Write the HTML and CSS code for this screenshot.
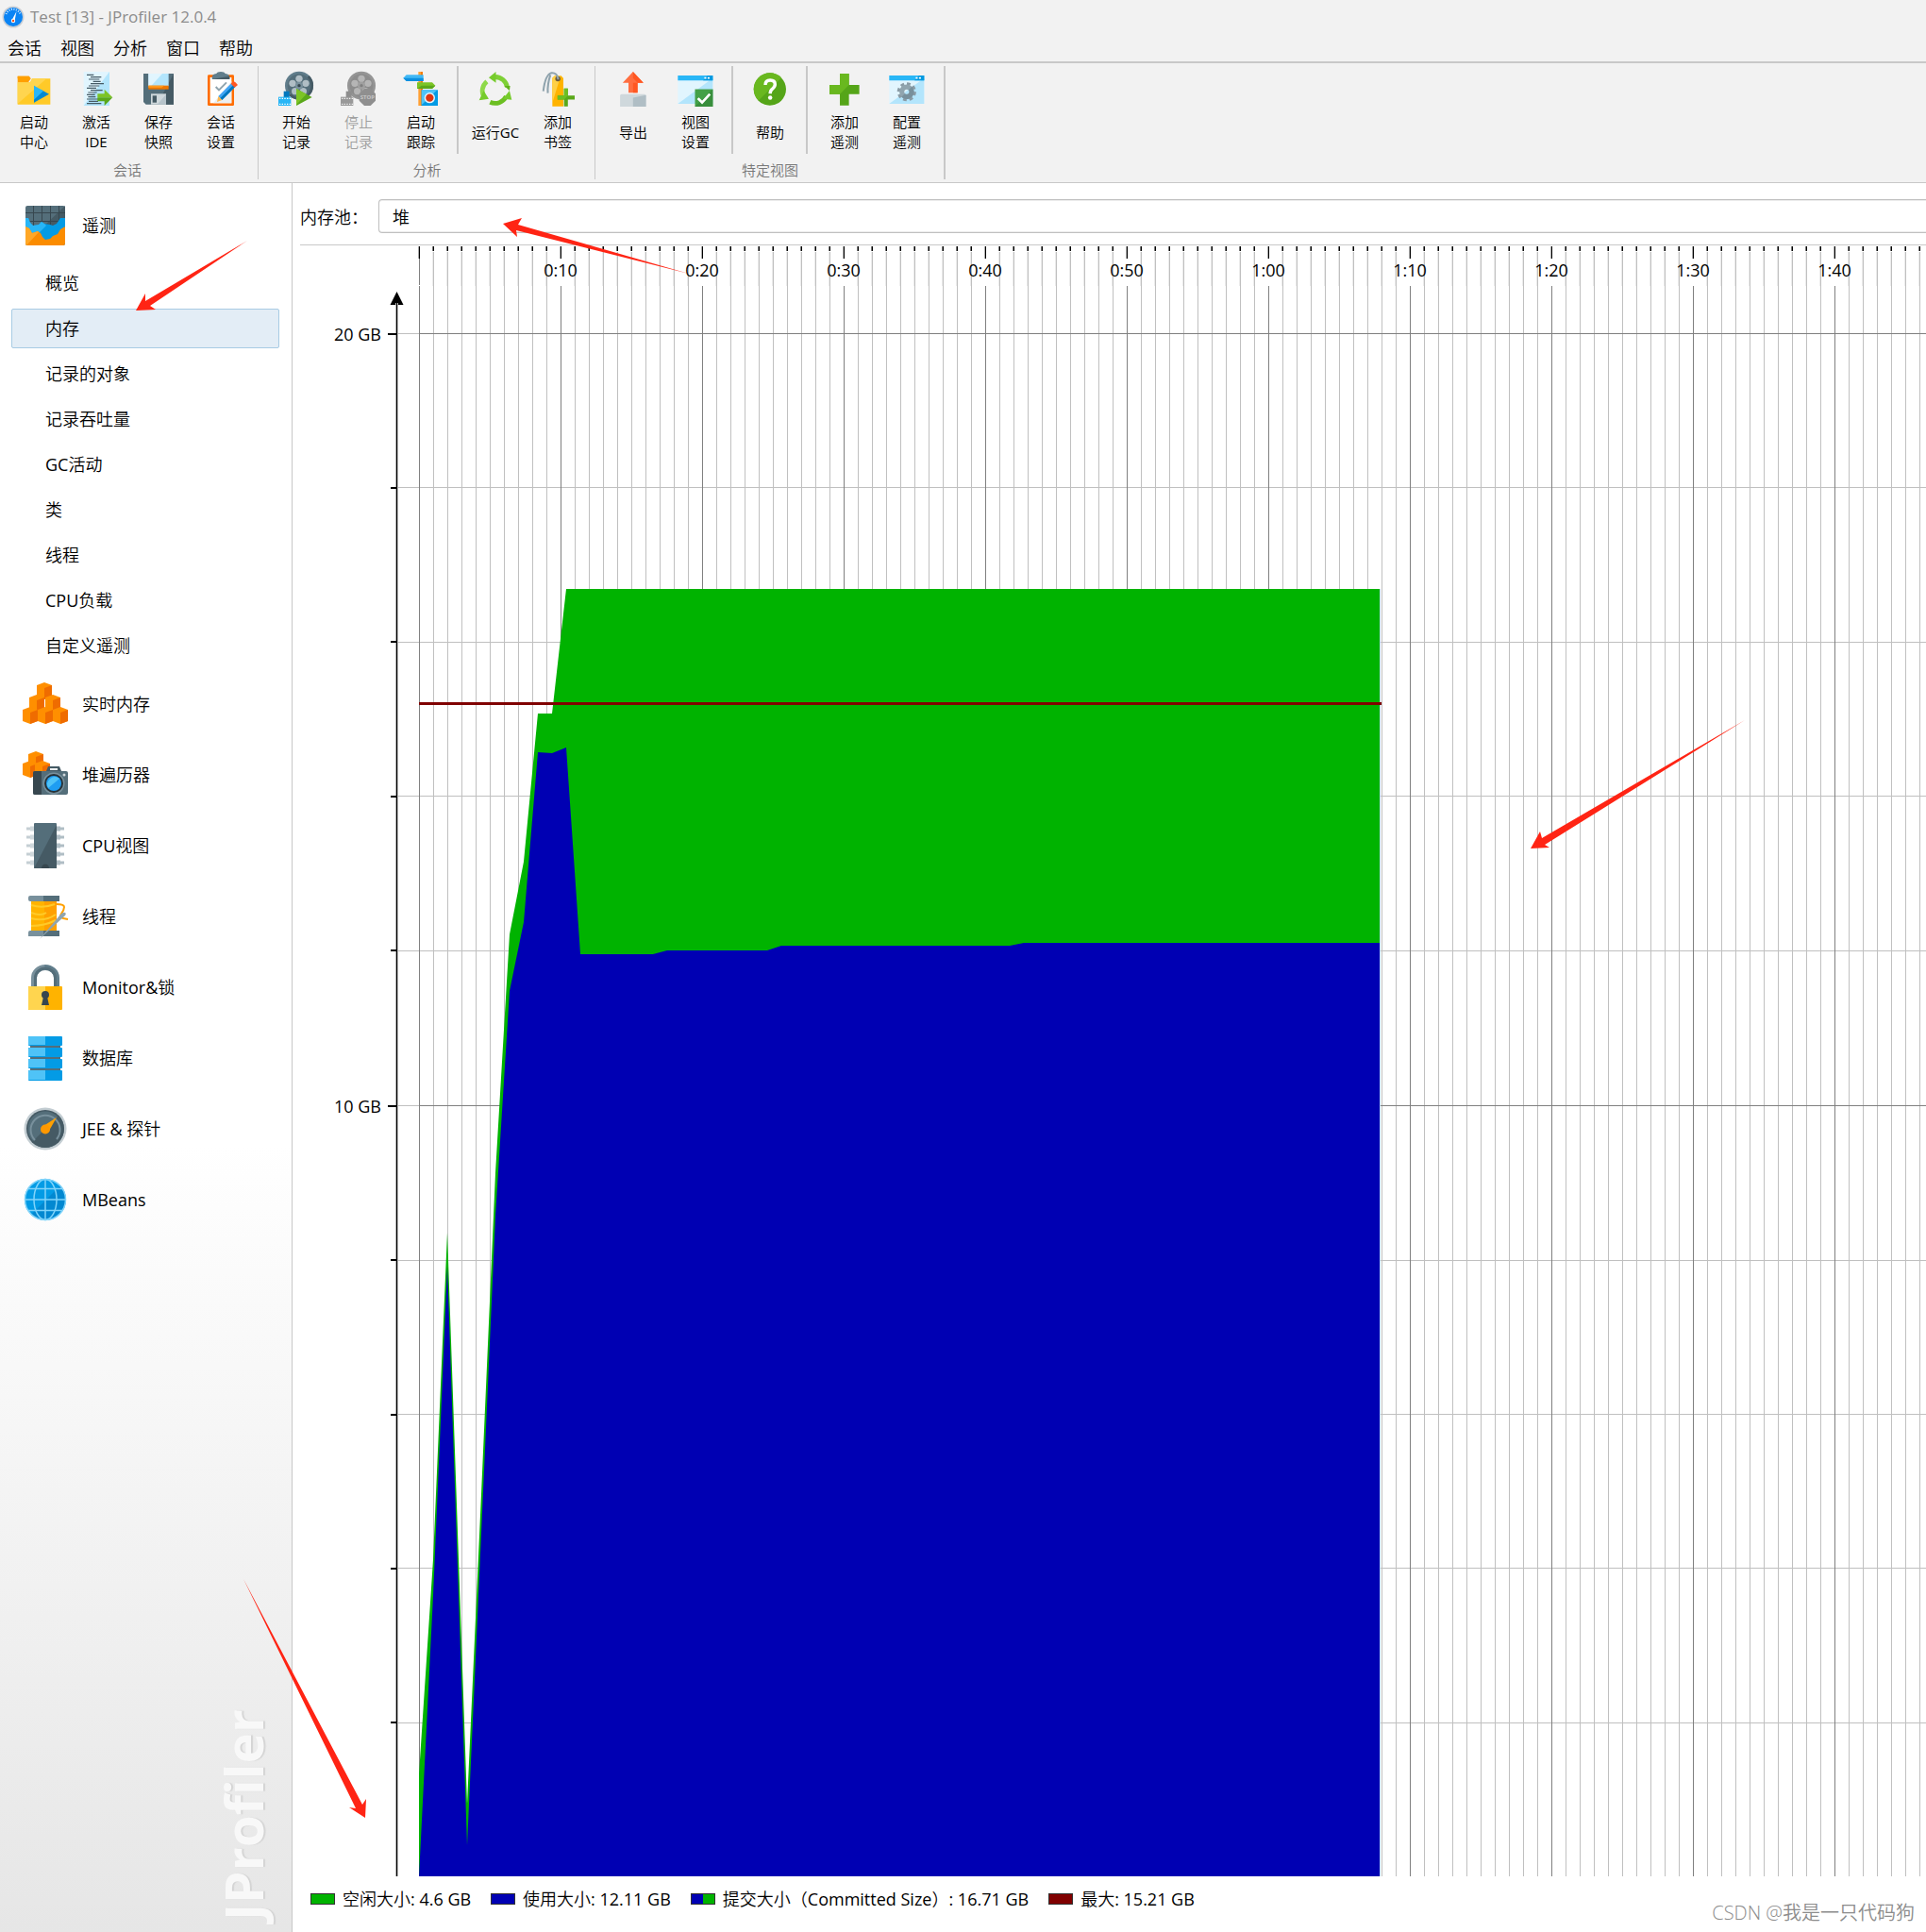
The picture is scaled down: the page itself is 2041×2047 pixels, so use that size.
FILE: index.html
```html
<!DOCTYPE html>
<html lang="zh-CN">
<head>
<meta charset="utf-8">
<meta name="viewport" content="width=device-width, initial-scale=1">
<title>Test [13] - JProfiler 12.0.4</title>
<link rel="stylesheet" href="styles.css">
</head>
<body>
<svg class="defs" aria-hidden="true">
  <defs>
    <g id="cube">
      <path fill="#ff8f00" d="M8 0l8 3v12l-8 3-8-3V3z"/>
      <path fill="#ef6c00" d="M8 6l8-3v12l-8 3z"/>
    </g>
  </defs>
</svg>

<header class="titlebar">
  <svg class="logo" viewBox="0 0 24 24" aria-hidden="true">
    <circle cx="12" cy="12" r="11.5" fill="#c9ced4"/>
    <circle cx="12" cy="12" r="10" fill="#0a84f5"/>
    <path d="M4.500 9a8 8 0 0 1 15 0" fill="none" stroke="#d6ecff" stroke-width="2" stroke-dasharray="1 1.500"/>
    <path d="M10.500 15.500L15.500 6l-2 10z" fill="#fff"/>
    <circle cx="12" cy="16" r="2.200" fill="#fff"/><circle cx="12" cy="16" r="1.200" fill="#f4511e"/>
  </svg>
  <h1 class="title">Test [13] - JProfiler 12.0.4</h1>
</header>

<nav class="menubar">
  <button>会话</button><button>视图</button><button>分析</button><button>窗口</button><button>帮助</button>
</nav>

<div class="toolbar">
  <section class="group first">
    <div class="tools">
      <button class="tool">
        <svg viewBox="0 0 108 108"><path fill="#ffa000" d="M2 14h36l6 8h-42z"/><path fill="#ffca28" d="M2 34h40l6-12h58v82H2z"/><path fill="#ffa000" d="M2 14h36l6 8-8 12H2z"/><path fill="#ffd54f" d="M2 34h40l6-12h46L2 102z"/><path fill="#29a9f0" d="M54 44v54l24-27z"/><path fill="#0288d1" d="M54 98l48-27-24-13-24 30z"/><path fill="#29b6f6" d="M54 44l30 17-30 28z"/></svg>
        <span>启动<br>中心</span>
      </button>
      <button class="tool">
        <svg viewBox="0 0 108 108"><path fill="#e1f5fe" d="M14 0h82v108H14z"/><path fill="#b3e5fc" d="M96 0v108H14z"/><path stroke="#455a64" stroke-width="3.500" d="M24 10h22M36 17h34M30 24h34M44 31h24M36 38h42M30 45h34M24 52h30M36 59h38M28 66h28M24 73h26M28 80h24M24 87h36M30 94h30M24 101h46"/><path fill="#7cc426" d="M58 70h22V56l26 26H58z"/><path fill="#5aa81a" d="M58 82h48l-26 26V94H58z"/></svg>
        <span>激活<br>IDE</span>
      </button>
      <button class="tool">
        <svg viewBox="0 0 108 108"><path fill="#546e7a" d="M6 6h96v98H14l-8-8z"/><path fill="#455a64" d="M102 6v98H50z"/><path fill="#b3e5fc" d="M22 6h64v40H22z"/><path fill="#e1f5fe" d="M22 6h44L30 46h-8z"/><path fill="#ef7800" d="M22 44h64v12H22z"/><path fill="#ff9c20" d="M22 44h50l-8 6H22z"/><path fill="#cfd8dc" d="M30 70h48v34H30z"/><path fill="#b6c3ca" d="M78 72v32H50z"/><path fill="#455a64" d="M35 76h13v22H35z"/></svg>
        <span>保存<br>快照</span>
      </button>
      <button class="tool">
        <svg viewBox="0 0 108 108"><rect x="12" y="10" width="84" height="98" rx="4" fill="#ff6d00"/><path fill="#fff" d="M20 18h68v82H20z"/><path fill="#eceff1" d="M88 30v70H30z"/><path fill="#607d8b" d="M26 24q-2-18 14-18 2-6 14-6t14 6q16 0 14 18z"/><path fill="#455a64" d="M26 24l56-10v10z"/><path fill="none" stroke="#90a4ae" stroke-width="6" d="M38 48l10 10 24-24"/><path fill="#42a5f5" d="M46 78l42-42 12 12-42 42z"/><path fill="#0277bd" d="M52 84l42-42 6 6-42 42z"/><path fill="#ffb74d" d="M46 78l-4 18 16-6z"/><path fill="#ff5722" d="M86 38l8-8q6 2 14 12l-10 8z"/></svg>
        <span>会话<br>设置</span>
      </button>
    </div>
    <h2 class="caption">会话</h2>
  </section>

  <section class="group">
    <div class="tools">
      <button class="tool">
        <svg viewBox="0 0 108 108"><circle cx="63" cy="44" r="45" fill="#607d8b"/><path fill="#455a64" d="M95 12a45 45 0 0 1-64 64z"/><circle cx="63" cy="44" r="37" fill="#546e7a"/><g fill="#b0bec5"><circle cx="63" cy="22" r="11"/><circle cx="84" cy="37" r="11"/><circle cx="76" cy="62" r="11"/><circle cx="50" cy="62" r="11"/><circle cx="42" cy="37" r="11"/></g><circle cx="63" cy="44" r="12" fill="#78909c"/><circle cx="63" cy="44" r="5" fill="#37474f"/><path fill="#0277bd" d="M14 62h18v20H14z"/><path fill="#29b6f6" d="M-3 80h40v28H-3z"/><path stroke="#fff" stroke-width="4" stroke-dasharray="4 4" d="M0 85h36M0 103h36"/><path fill="#5aa81a" d="M54 54l50 27-50 27z"/><path fill="#7cc426" d="M54 54l32 17-32 34z"/></svg>
        <span>开始<br>记录</span>
      </button>
      <button class="tool" disabled>
        <svg viewBox="0 0 108 108"><circle cx="63" cy="44" r="45" fill="#959595"/><circle cx="63" cy="44" r="37" fill="#8c8c8c"/><g fill="#b5b5b5"><circle cx="63" cy="22" r="11"/><circle cx="84" cy="37" r="11"/><circle cx="76" cy="62" r="11"/><circle cx="50" cy="62" r="11"/><circle cx="42" cy="37" r="11"/></g><circle cx="63" cy="44" r="12" fill="#a0a0a0"/><circle cx="63" cy="44" r="5" fill="#808080"/><path fill="#8d8d8d" d="M14 62h18v20H14z"/><path fill="#999" d="M-3 80h40v28H-3z"/><path stroke="#eee" stroke-width="4" stroke-dasharray="4 4" d="M0 85h36M0 103h36"/><path fill="#8f8f8f" d="M72 54h20l16 16v22l-16 16H72L56 92V70z"/><text x="82" y="88" font-size="18" font-weight="700" fill="#c4c4c4" text-anchor="middle">STOP</text></svg>
        <span>停止<br>记录</span>
      </button>
      <button class="tool">
        <svg viewBox="0 0 108 108"><path fill="#ffa033" d="M46 0h14v108H46z"/><path fill="#f57c00" d="M54 0h6v108h-6z"/><path fill="#42b8f5" d="M8 10h54v20H8L-2 20z"/><path fill="#0b8fe0" d="M62 20v10H8L-2 20z"/><path fill="#7cc426" d="M42 34h48l10 10-10 10H42z"/><path fill="#5aa81a" d="M42 54l14-10h44L90 54z"/><path fill="#039be5" d="M56 58h52v50H56z"/><path fill="#4fc3f7" d="M56 58h50l-50 48z"/><circle cx="82" cy="83" r="17" fill="#e3f4fd"/><circle cx="82" cy="83" r="12.500" fill="#dd3410"/></svg>
        <span>启动<br>跟踪</span>
      </button>
      <i class="sep"></i>
      <button class="tool">
        <svg viewBox="0 0 105 105"><g fill="none" stroke-width="14"><path stroke="#7ed036" d="M52 16a38 38 0 0 1 37 32"/><path stroke="#6cbf22" d="M86 76a38 38 0 0 1-50 18"/><path stroke="#8ed949" d="M17 78a38 38 0 0 1 9-48"/></g><path fill="#76cb2c" d="M54 0v34L32 18zM103 87l-27-3 20-26zM2 88l14-30 16 26z"/><path fill="#5fb31a" d="M80 44h18l-2 14z"/></svg>
        <span>运行GC</span>
      </button>
      <button class="tool">
        <svg viewBox="0 0 105 105"><path fill="#ffb300" d="M36 20l8-8h18l8 8v87H36z"/><path fill="#ffd047" d="M36 20l8-8h18l-26 84z"/><circle cx="53" cy="22" r="8" fill="#6d5a3a"/><path fill="none" stroke="#8fa3ad" stroke-width="6" d="M54 24Q52 2 32 4 14 10 8 60M30 10Q20 40 22 66"/><path fill="#5aa81a" d="M72 52h12v22h21v12H84v21H72V86H52V74h20z"/><path fill="#6cbf22" d="M72 52h12v22L72 86H52V74h20z"/></svg>
        <span>添加<br>书签</span>
      </button>
    </div>
    <h2 class="caption">分析</h2>
  </section>

  <section class="group last">
    <div class="tools">
      <button class="tool">
        <svg viewBox="0 0 105 105"><path fill="#ff6e40" d="M52 0L20 34h18v31h28V34h18z"/><path fill="#ff5722" d="M52 0v20l14 14H38l14 0v31h14V34h18z"/><path fill="#cfd8dc" d="M12 72l4-3h72l4 3v36H12z"/><path fill="#b0bec5" d="M92 72v36H52V80z"/></svg>
        <span>导出</span>
      </button>
      <button class="tool">
        <svg viewBox="0 0 105 105"><path fill="#e1f5fe" d="M-2 12h108v87H-2z"/><path fill="#b3e5fc" d="M106 20v79H-2z"/><path fill="#29b6f6" d="M-2 12h108v15H-2z"/><path fill="#0299e0" d="M90 12h16v15H76z"/><path fill="#fff" d="M80 17h6v5h-6zM90 17h6v5h-6z"/><path fill="#43a047" d="M51 54h55v54H51z"/><path fill="#388e3c" d="M106 54v54H51z"/><path fill="none" stroke="#fff" stroke-width="8" d="M60 82l13 13 24-26"/></svg>
        <span>视图<br>设置</span>
      </button>
      <i class="sep"></i>
      <button class="tool">
        <svg viewBox="0 0 105 105"><circle cx="52" cy="54" r="50" fill="#55a518"/><path fill="#69b81f" d="M17 89A50 50 0 0 1 88 18z"/><path fill="none" stroke="#fff" stroke-width="10" d="M38 41q0-15 15-15t15 13q0 8-8 14-7 5-7 15"/><circle cx="53" cy="80" r="6.500" fill="#fff"/></svg>
        <span>帮助</span>
      </button>
      <i class="sep"></i>
      <button class="tool">
        <svg viewBox="0 0 105 105"><path fill="#55a518" d="M38 6h28v35h32v28H66v35H38V69H6V41h32z"/><path fill="#69b81f" d="M38 6h28v35L38 69H6V41h32z"/></svg>
        <span>添加<br>遥测</span>
      </button>
      <button class="tool">
        <svg viewBox="0 0 105 105"><path fill="#e1f5fe" d="M-2 12h108v87H-2z"/><path fill="#b3e5fc" d="M106 20v79H-2z"/><path fill="#29b6f6" d="M-2 12h108v15H-2z"/><path fill="#0299e0" d="M90 12h16v15H76z"/><path fill="#fff" d="M80 17h6v5h-6zM90 17h6v5h-6z"/><circle cx="52" cy="62" r="25" fill="none" stroke="#8a9ba5" stroke-width="9" stroke-dasharray="11 8.600"/><circle cx="52" cy="62" r="15" fill="none" stroke="#90a4ae" stroke-width="15"/><path fill="none" stroke="#78909c" stroke-width="15" d="M63 51a15 15 0 0 1-22 22"/></svg>
        <span>配置<br>遥测</span>
      </button>
    </div>
    <h2 class="caption">特定视图</h2>
  </section>
</div>

<div class="workspace">
  <nav class="sidebar">
    <button class="section">
      <svg viewBox="0 0 48 48"><rect x="3" y="3" width="42" height="42" rx="2" fill="#546e7a"/><path fill="#455a64" d="M45 3v22H22z"/><path stroke="#37474f" stroke-width="1" d="M11.500 3v22M20.500 3v22M29.500 3v22M38.500 3v22M3 10.500h42M3 19.500h42"/><path fill="#039be5" d="M3 16l3 0 2 5 3 3 6-1 3-3 3 2 6 1 3 1 4-2 2-3 2-3 5 0v28H3z"/><path fill="#29b6f6" d="M3 16l3 0 2 5 3 3 6-1 3-3 3 2 2 2-12 12H3z"/><path fill="#fb8c00" d="M3 25l4 2 3 5 6-2 3 2 2 4 3 3 5-1 3-3 5-2 3-5 5-3v18q0 2-2 2H5q-2 0-2-2z"/><path fill="#ffa726" d="M3 25l4 2 3 5 6-2 1 1L4 45l-1-2z"/></svg>
      遥测
    </button>
    <ul class="views">
      <li><a href="#overview">概览</a></li>
      <li><a href="#memory" class="current" aria-current="page">内存</a></li>
      <li><a href="#recorded">记录的对象</a></li>
      <li><a href="#throughput">记录吞吐量</a></li>
      <li><a href="#gc">GC活动</a></li>
      <li><a href="#classes">类</a></li>
      <li><a href="#threads">线程</a></li>
      <li><a href="#cpu">CPU负载</a></li>
      <li><a href="#custom">自定义遥测</a></li>
    </ul>
    <button class="section">
      <svg viewBox="0 0 48 48"><use href="#cube" x="15" y="1"/><use href="#cube" x="7" y="14"/><use href="#cube" x="24" y="14"/><use href="#cube" x="0" y="27"/><use href="#cube" x="16" y="27"/><use href="#cube" x="32" y="27"/></svg>
      实时内存
    </button>
    <button class="section">
      <svg viewBox="0 0 48 48"><use href="#cube" x="6" y="-1"/><use href="#cube" x="0" y="9"/><use href="#cube" x="13" y="9"/><path fill="#455a64" d="M25 20l2-5h12l2 5z"/><path fill="#eceff1" d="M29 17h8v2h-8z"/><rect x="11" y="20" width="37" height="25" rx="2" fill="#546e7a"/><path fill="#37474f" d="M11 22q0-2 2-2h7v25h-7q-2 0-2-2z"/><circle cx="33" cy="33" r="11.500" fill="#78909c"/><circle cx="33" cy="33" r="10" fill="#263238"/><circle cx="33" cy="33" r="8" fill="#1e9df2"/><path fill="#4fc3f7" d="M27 38a8 8 0 0 1 12-10z"/><circle cx="44" cy="24" r="1.500" fill="#cfd8dc"/></svg>
      堆遍历器
    </button>
    <button class="section">
      <svg viewBox="0 0 48 48"><path stroke="#c5cfd4" stroke-width="3" d="M4 6h9M4 15h9M4 24h9M4 33h9M4 42h9"/><path stroke="#cfd8dc" stroke-width="5" d="M8 6h5M8 15h5M8 24h5M8 33h5M8 42h5"/><path stroke="#b0bec5" stroke-width="3" d="M35 6h9M35 15h9M35 24h9M35 33h9M35 42h9"/><path stroke="#b0bec5" stroke-width="5" d="M35 6h5M35 15h5M35 24h5M35 33h5M35 42h5"/><rect x="12" y="0" width="24" height="48" rx="1" fill="#546e7a"/><path fill="#455a64" d="M36 2v46H12z"/><path fill="#37474f" d="M20 48a4 4.500 0 0 1 8 0z"/></svg>
      CPU视图
    </button>
    <button class="section">
      <svg viewBox="0 0 48 48"><path fill="#ffb300" d="M9 8h27v32H9z"/><path fill="#ffa000" d="M23 8h13v32H23z"/><path fill="none" stroke="#ffca28" stroke-width="2" d="M9 12q12 4 25-1M9 20q10 4 16 0M9 26q14 4 26-4M9 34q14 0 26-6"/><path fill="#78909c" d="M6 4q0-2 2-2h31v6H8q-2 0-2-2z"/><path fill="#546e7a" d="M22 2h17v6H22z"/><path fill="#78909c" d="M6 41q0-2 2-2h31v6H6z"/><path fill="#546e7a" d="M22 39h17v6H22z"/><path fill="none" stroke="#ffa000" stroke-width="2" d="M36 11q8 0 8 3t-3 7 2 5 5 1"/><path fill="#90a4ae" d="M18 48l22-26q3-3 5-2t-1 4z"/></svg>
      线程
    </button>
    <button class="section">
      <svg viewBox="0 0 48 48"><path fill="none" stroke="#78909c" stroke-width="6" d="M12 24V14a12 11 0 0 1 12-11"/><path fill="none" stroke="#607d8b" stroke-width="6" d="M36 24V14A12 11 0 0 0 23.500 3"/><path fill="none" stroke="#546e7a" stroke-width="3" d="M13.500 24V14a10.500 10 0 0 1 21 0v10"/><rect x="6" y="23" width="36" height="25" rx="1" fill="#ffb300"/><path fill="#ffd54f" d="M7 23h17v25H7l-1-1V24z"/><circle cx="24" cy="32" r="4" fill="#37474f"/><path fill="#37474f" d="M22 34h4l2 9h-8z"/></svg>
      Monitor&amp;锁
    </button>
    <button class="section">
      <svg viewBox="0 0 48 48"><path fill="#546e7a" d="M8 4h32v40H8z"/><g fill="#039be5"><rect x="6" y="1" width="36" height="10" rx="1"/><rect x="6" y="13" width="36" height="10" rx="1"/><rect x="6" y="25" width="36" height="10" rx="1"/><rect x="6" y="37" width="36" height="11" rx="1"/></g><path fill="#4fc3f7" d="M6 2l1-1h17v9H6zM6 14l1-1h17v9H6zM6 26l1-1h17v9H6zM6 38l1-1h17v10H6z"/></svg>
      数据库
    </button>
    <button class="section">
      <svg viewBox="0 0 48 48"><circle cx="24" cy="24" r="22.500" fill="#c3cdd2"/><circle cx="24" cy="24" r="20" fill="#455a64"/><circle cx="24" cy="24" r="18.500" fill="#546e7a"/><path fill="#455a64" d="M38 10a19.500 19.500 0 0 1-28 28z"/><path fill="none" stroke="#78909c" stroke-width="2" d="M13 36a15.500 15.500 0 1 1 23-1"/><path fill="#ffa000" d="M36 12l-8 14-6-5z"/><circle cx="24" cy="24.500" r="5" fill="#ff9800"/></svg>
      JEE &amp; 探针
    </button>
    <button class="section">
      <svg viewBox="0 0 48 48"><circle cx="24" cy="24" r="22" fill="#039be5"/><path fill="#0288d1" d="M40 9a22 22 0 0 1-31 31z"/><g fill="none" stroke="#81d4fa" stroke-width="1.500"><circle cx="24" cy="24" r="21.500"/><ellipse cx="24" cy="24" rx="12" ry="21.500"/><path d="M24 2v44M2 24h44M6 12.500h36M6 35.500h36"/></g></svg>
      MBeans
    </button>
    <div class="brand" aria-hidden="true">JProfiler</div>
  </nav>

  <main class="content">
    <div class="pool">
      <label for="pool">内存池：</label>
      <select id="pool"><option>堆</option></select>
    </div>

    <div class="chart">
      <svg class="ruler" aria-hidden="true">
        <defs>
          <pattern id="ticks" x="126" width="15" height="42" patternUnits="userSpaceOnUse">
            <path fill="#c0c0c0" d="M0 6h1v36H0z"/><path fill="#ebebeb" d="M14 6h1v36h-1z"/>
            <path fill="#000" d="M0 0h1v5H0z"/><path fill="#777" d="M14 0h1v5h-1z"/>
          </pattern>
          <pattern id="majorTicks" x="125" width="150" height="42" patternUnits="userSpaceOnUse">
            <path fill="#fff" d="M0 0h3v42H0z"/><path fill="#000" d="M1 0h1v13H1z"/><path fill="#aaa" d="M0 0h1v13H0z"/>
          </pattern>
        </defs>
        <rect x="125" width="100%" height="42" fill="url(#ticks)"/>
        <rect x="125" width="100%" height="42" fill="url(#majorTicks)"/>
        <path fill="#808080" d="M126 13h1v28h-1z"/>
        <g class="times">
          <text x="276" y="32">0:10</text><text x="426" y="32">0:20</text><text x="576" y="32">0:30</text><text x="726" y="32">0:40</text><text x="876" y="32">0:50</text><text x="1026" y="32">1:00</text><text x="1176" y="32">1:10</text><text x="1326" y="32">1:20</text><text x="1476" y="32">1:30</text><text x="1626" y="32">1:40</text>
        </g>
      </svg>
      <svg class="plot" role="img" aria-label="内存池：堆">
        <defs>
          <pattern id="seconds" x="126" width="15" height="100" patternUnits="userSpaceOnUse"><path fill="#c0c0c0" d="M0 0h1v100H0z"/></pattern>
          <pattern id="tens" x="126" width="150" height="100" patternUnits="userSpaceOnUse"><path fill="#808080" d="M0 0h1v100H0z"/></pattern>
        </defs>
        <rect x="126" width="100%" height="100%" fill="url(#seconds)"/>
        <g class="minor">
          <line x1="103" x2="100%" y1="12.700%" y2="12.700%"/><line x1="103" x2="100%" y1="22.400%" y2="22.400%"/><line x1="103" x2="100%" y1="32.100%" y2="32.100%"/><line x1="103" x2="100%" y1="41.800%" y2="41.800%"/><line x1="103" x2="100%" y1="61.250%" y2="61.250%"/><line x1="103" x2="100%" y1="70.950%" y2="70.950%"/><line x1="103" x2="100%" y1="80.640%" y2="80.640%"/><line x1="103" x2="100%" y1="90.340%" y2="90.340%"/>
        </g>
        <g class="major">
          <line x1="126" x2="100%" y1="3.020%" y2="3.020%"/><line x1="126" x2="100%" y1="51.550%" y2="51.550%"/>
        </g>
        <rect x="126" width="100%" height="100%" fill="url(#tens)"/>
        <g class="minor"><line x1="103" x2="126" y1="3.020%" y2="3.020%"/><line x1="103" x2="126" y1="51.550%" y2="51.550%"/></g>
        <svg x="126" width="1020" height="100%" viewBox="0 0 1020 1685" preserveAspectRatio="none">
          <polygon fill="#00b300" points="0,1685 0,1577 15,1349 30,1003 51,1608 66,1280 81,940 96,687 111,610 126,453 141,453 156,321 1018,321 1018,1685"/>
          <polygon fill="#0000b3" points="0,1685 15,1388 30,1039 51,1652 66,1322 81,986 96,747 111,674 126,494 141,495 156,489 171,708 248,708 263,704 369,704 384,699 626,699 641,696 1018,696 1018,1685"/>
          <path fill="#b8d8f8" d="M1018 321h1v1364h-1z"/>
          <path fill="#800000" d="M0 441h1020v3H0z"/>
        </svg>
        <path d="M102.500 6l7 14h-14z"/>
        <rect x="101" y="18" width="3" height="100%" fill="#b4b4b4"/>
        <rect x="102" y="18" width="1" height="100%" fill="#000"/>
        <g class="notches">
          <line x1="93" x2="102" y1="3.020%" y2="3.020%"/><line x1="96" x2="102" y1="12.700%" y2="12.700%"/><line x1="96" x2="102" y1="22.400%" y2="22.400%"/><line x1="96" x2="102" y1="32.100%" y2="32.100%"/><line x1="96" x2="102" y1="41.800%" y2="41.800%"/><line x1="93" x2="102" y1="51.550%" y2="51.550%"/><line x1="96" x2="102" y1="61.250%" y2="61.250%"/><line x1="96" x2="102" y1="70.950%" y2="70.950%"/><line x1="96" x2="102" y1="80.640%" y2="80.640%"/><line x1="96" x2="102" y1="90.340%" y2="90.340%"/>
        </g>
        <g class="sizes"><text x="86" y="3.020%" dy="7">20 GB</text><text x="86" y="51.550%" dy="7">10 GB</text></g>
      </svg>
    </div>

    <ul class="legend">
      <li><i class="swatch free"></i>空闲大小: 4.6 GB</li>
      <li><i class="swatch used"></i>使用大小: 12.11 GB</li>
      <li><i class="swatch committed"></i>提交大小（Committed Size）: 16.71 GB</li>
      <li><i class="swatch max"></i>最大: 15.21 GB</li>
    </ul>
  </main>
</div>

<svg class="annotations" aria-hidden="true">
  <path d="M144 329l10-18v8l108-64-103 69 6 4z"/>
  <path d="M533 237l20-6-4 7 181 52-183-46 1 7z"/>
  <path d="M1622 899l10-18 2 7 215-125-212 132 5 3z"/>
  <path d="M387 1926l1-20-4 6-126-239 119 243-7-1z"/>
</svg>
<div class="credit">CSDN @我是一只代码狗</div>
</body>
</html>
```
FILE: styles.css
```css
* { box-sizing: border-box; }

body {
  position: relative;
  margin: 0;
  min-height: 100vh;
  display: flex;
  flex-direction: column;
  overflow-x: hidden;
  background: #fff;
  color: #000;
  font: 18px/24px "Open Sans", "Noto Sans CJK SC DemiLight", "Noto Sans CJK SC Light", "Noto Sans CJK SC", sans-serif;
}

button, select { font: inherit; color: inherit; }
button { border: 0; padding: 0; background: none; }
ul { list-style: none; margin: 0; padding: 0; }
.defs { position: absolute; width: 0; height: 0; }

/* Title and menus */
.titlebar {
  display: flex;
  align-items: center;
  gap: 6px;
  height: 35px;
  padding-left: 2px;
  background: #f2f2f2;
}
.logo { width: 24px; height: 24px; }
.title { margin: 0; font-size: 17px; font-weight: 400; color: #8c8c8c; }

.menubar {
  display: flex;
  gap: 20px;
  height: 32px;
  padding: 4px 8px 0;
  align-items: flex-start;
  background: #f2f2f2;
  border-bottom: 2px solid #c8c8c8;
}

/* Toolbar */
.toolbar {
  display: flex;
  height: 127px;
  padding-top: 3px;
  background: #f2f2f2;
  border-bottom: 1px solid #c8c8c8;
}
.group {
  display: flex;
  flex-direction: column;
  height: 120px;
  padding: 0 6px 0 7px;
  border-right: 1px solid #c8c8c8;
}
.group.first { padding-left: 3px; }
.group.last { border-right-width: 2px; }
.tools { display: flex; }
.tool {
  display: flex;
  flex-direction: column;
  align-items: center;
  gap: 7px;
  width: 66px;
  padding-top: 6px;
  font-size: 15px;
  line-height: 21px;
}
.tool svg { width: 36px; height: 36px; overflow: visible; }
.tool span { display: flex; align-items: center; height: 42px; text-align: center; white-space: nowrap; }
.tool:disabled { color: #a0a0a0; }
.sep { width: 2px; height: 93px; margin: 0 6px 0 5px; background: #c8c8c8; }
.caption {
  margin: auto 0 0;
  font-size: 15px;
  line-height: 20px;
  font-weight: 400;
  text-align: center;
  color: #787878;
}

/* Sidebar */
.workspace { flex: 1; display: flex; }
.sidebar {
  flex: none;
  display: flex;
  flex-direction: column;
  width: 310px;
  padding-top: 7px;
  border-right: 1px solid #c8c8c8;
  background: linear-gradient(#fff 55%, #e6e6e6);
}
.section {
  display: flex;
  align-items: center;
  gap: 15px;
  height: 75px;
  padding-left: 24px;
  text-align: left;
}
.section svg { width: 48px; height: 48px; overflow: visible; }
.views a {
  display: block;
  height: 42px;
  margin: 0 13px 0 12px;
  padding-left: 35px;
  line-height: 40px;
  border: 1px solid transparent;
  border-radius: 2px;
  color: inherit;
  text-decoration: none;
}
.views li { height: 48px; padding-top: 3px; }
.views .current { background: #e3edf6; border-color: #a8cbe4; }
.brand {
  align-self: flex-end;
  margin: auto 15px 12px 0;
  writing-mode: vertical-rl;
  transform: rotate(180deg);
  font-size: 55px;
  line-height: 72px;
  font-weight: 700;
  color: #f8f8f8;
  text-shadow: 0 2px 1px #d4d4d4;
}

/* Memory view */
.content {
  flex: 1;
  min-width: 0;
  display: flex;
  flex-direction: column;
  padding-left: 8px;
}
.pool { display: flex; align-items: center; gap: 11px; height: 65px; padding-top: 5px; }
.pool label { flex: none; width: 72px; padding-top: 2px; white-space: nowrap; }
.pool select {
  flex: 1;
  height: 36px;
  padding: 1px 14px 0;
  appearance: none;
  background: #fff;
  border: 1px solid #c0c0c0;
  border-right: 0;
  border-radius: 4px 0 0 4px;
  box-shadow: inset 0 1px #ececec, inset 0 -1px #ececec;
}
.chart {
  flex: 1;
  display: flex;
  flex-direction: column;
  min-height: 600px;
  border-top: 1px solid #c8c8c8;
  padding-top: 1px;
}
.ruler { flex: none; width: 100%; height: 42px; overflow: hidden; }
.plot { flex: 1; width: 100%; min-height: 0; overflow: hidden; }
.times text { text-anchor: middle; }
.sizes text { text-anchor: end; }
.minor line { stroke: #c0c0c0; shape-rendering: crispEdges; }
.major line { stroke: #808080; shape-rendering: crispEdges; }
.notches line { stroke: #000; stroke-width: 2; shape-rendering: crispEdges; }

.legend { display: flex; height: 59px; padding: 12px 0 0 11px; gap: 21px; white-space: nowrap; }
.legend li { display: flex; align-items: center; gap: 8px; height: 24px; }
.swatch { width: 26px; height: 12px; border: 1px solid #333; }
.free { background: #00b300; }
.used { background: #0000b3; }
.committed { background: linear-gradient(90deg, #0000b3 50%, #00b300 50%); }
.max { background: #800000; }

/* Marks laid over the page */
.annotations { position: absolute; inset: 0; width: 100%; height: 100%; pointer-events: none; }
.annotations path { fill: #ff2414; }
.credit {
  position: absolute;
  right: 12px;
  bottom: 6px;
  font-size: 20px;
  line-height: 28px;
  font-weight: 300;
  color: #8c8c8c;
}
```
